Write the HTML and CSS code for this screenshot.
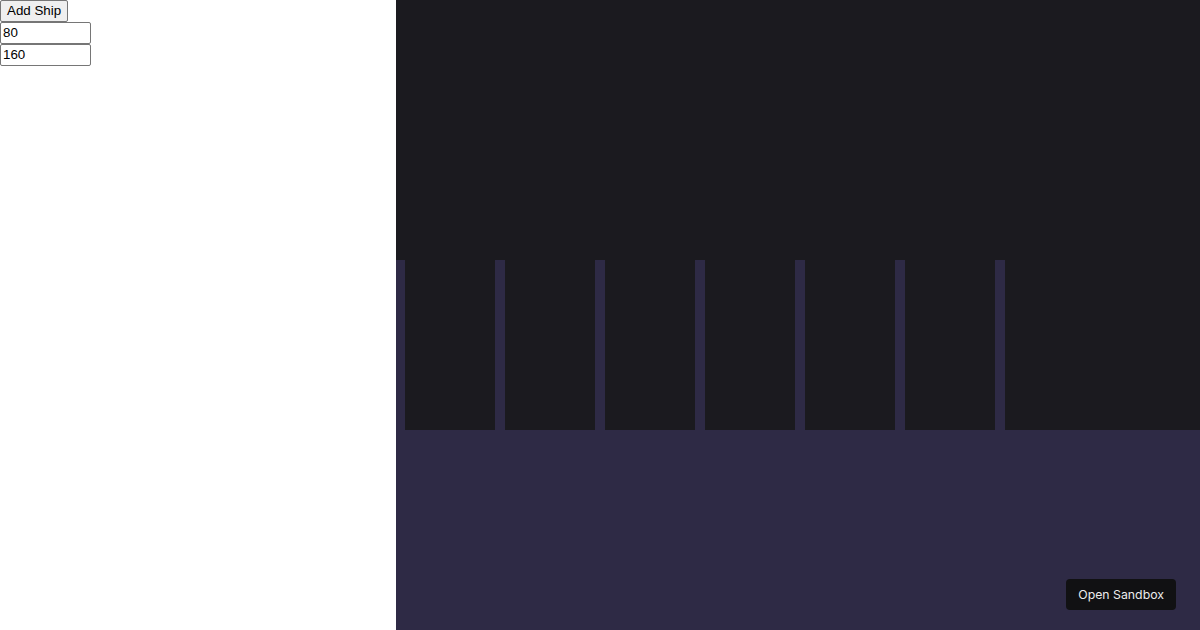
FILE: index.html
```html
<!DOCTYPE html>
<html>
<head>
<meta charset="utf-8">
<link rel="stylesheet" href="styles.css">
</head>
<body>
<div class="app">
  <div class="panel">
    <button class="add-btn">Add Ship</button>
    <input class="field" type="text" value="80">
    <input class="field" type="text" value="160">
  </div>
  <div class="scene">
    <div class="sky"></div>
    <div class="pier">
      <div class="pile first"></div>
      <div class="pile"></div>
      <div class="pile"></div>
      <div class="pile"></div>
      <div class="pile"></div>
      <div class="pile"></div>
      <div class="pile"></div>
    </div>
    <div class="water"></div>
    <button class="sandbox-btn">Open Sandbox</button>
  </div>
</div>
</body>
</html>
```

FILE: styles.css
```css
html, body {
  margin: 0;
  padding: 0;
  height: 100%;
  overflow: hidden;
}
.app {
  display: flex;
  width: 1200px;
  height: 630px;
}
.panel {
  width: 396px;
  flex: none;
  background: #ffffff;
  display: flex;
  flex-direction: column;
  align-items: flex-start;
}
.add-btn {
  font-family: "Liberation Sans", Arial, sans-serif;
  font-size: 13.33px;
  height: 22px;
  padding: 0 6px 1px;
  margin: 0;
  border: 1px solid #767676;
  border-radius: 2px;
  background: #efefef;
  color: #000;
}
.field {
  font-family: "Liberation Sans", Arial, sans-serif;
  font-size: 13.33px;
  width: 91px;
  height: 22px;
  box-sizing: border-box;
  margin: 0;
  padding: 0 2px 1px;
  border: 1px solid #767676;
  border-radius: 2px;
  color: #000;
}
.scene {
  flex: 1;
  position: relative;
  display: flex;
  flex-direction: column;
  background: #1b1a1f;
}
.sky {
  height: 260px;
  flex: none;
}
.pier {
  height: 170px;
  flex: none;
  display: flex;
  gap: 90px;
}
.pile {
  width: 10px;
  background: #2e2a45;
}
.pile.first {
  width: 9px;
}
.water {
  flex: 1;
  background: #2e2a45;
}
.sandbox-btn {
  position: absolute;
  right: 24px;
  bottom: 20px;
  height: 31px;
  padding: 0 12px;
  border: none;
  border-radius: 4px;
  background: #111113;
  color: #ececec;
  font-family: Inter, "Liberation Sans", sans-serif;
  font-size: 12.3px;
}
```
